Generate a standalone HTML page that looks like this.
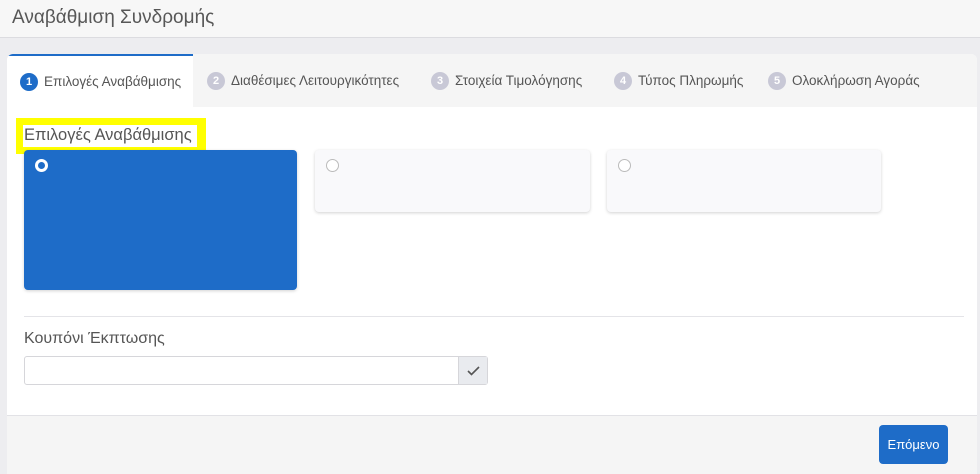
<!DOCTYPE html>
<html><head><meta charset="utf-8"><style>
*{box-sizing:border-box;margin:0;padding:0}
body{width:980px;height:474px;background:#ededf0;font-family:"Liberation Sans","DejaVu Sans",sans-serif;position:relative;overflow:hidden;color:#555}
.hdr{position:absolute;left:0;top:0;width:980px;height:38px;background:#f7f7f7;border-bottom:1px solid #dcdce0}
.hdr span{position:absolute;left:12px;top:7px;font-size:19px;color:#575757}
.card{position:absolute;left:7px;top:54px;width:970px;height:420px;background:#fff;border-radius:6px 6px 0 0;overflow:hidden}
.tabs{position:absolute;left:0;top:0;width:970px;height:53px;background:#f5f5f5}
.tab{position:absolute;top:0;height:53px;font-size:13.5px;color:#555;display:flex;align-items:center;white-space:nowrap}
.tab.a{left:0;width:186px;background:#fff;border-top:2px solid #1e6cc8;padding-left:13px}
.n{display:inline-block;width:18px;height:18px;border-radius:50%;background:#c8c8d6;color:#fff;font-size:11px;font-weight:bold;text-align:center;line-height:18px;margin-right:6px}
.a .n{background:#1e6cc8}
.yb{position:absolute;left:16px;top:118px;width:190px;height:36px;background:#ffff00}
.yb span{position:absolute;left:7px;top:7px;width:174px;height:22px;background:#fff;font-size:16.5px;color:#555;padding-left:1px;line-height:21px;white-space:nowrap}
.opt{position:absolute;border-radius:4px;box-shadow:0 1px 3px rgba(0,0,0,.18);background:#f9f9fb}
.r{position:absolute;left:11px;top:9px;width:13px;height:13px;border-radius:50%;border:1px solid #bbb;background:#fff}
.sel{background:#1e6cc8}
.sel .r{border:3px solid #fff;background:#1e6cc8}
.div{position:absolute;left:24px;top:316px;width:940px;height:1px;background:#e4e4e8}
.lbl{position:absolute;left:24px;top:330px;font-size:16px;color:#555}
.inp{position:absolute;left:24px;top:356px;width:464px;height:29px;border:1px solid #d6d6da;border-radius:3px;background:#fff}
.chk{position:absolute;right:0;top:0;width:29px;height:27px;background:#e9ebef;border-left:1px solid #d6d6da}
.foot{position:absolute;left:7px;top:415px;width:970px;height:59px;background:#f5f5f5;border-top:1px solid #e2e2e6}
.btn{position:absolute;left:879px;top:425px;width:69px;height:39px;background:#1e6cc8;border-radius:4px;color:#fff;font-size:13px;text-align:center;line-height:39px}
</style></head><body>
<div class="hdr"><span>Αναβάθμιση Συνδρομής</span></div>
<div class="card">
<div class="tabs">
<div class="tab a"><span class="n">1</span>Επιλογές Αναβάθμισης</div>
<div class="tab" style="left:200px"><span class="n">2</span>Διαθέσιμες Λειτουργικότητες</div>
<div class="tab" style="left:424px"><span class="n">3</span>Στοιχεία Τιμολόγησης</div>
<div class="tab" style="left:607px"><span class="n">4</span>Τύπος Πληρωμής</div>
<div class="tab" style="left:761px"><span class="n">5</span>Ολοκλήρωση Αγοράς</div>
</div>
</div>
<div class="yb"><span>Επιλογές Αναβάθμισης</span></div>
<div class="opt sel" style="left:24px;top:150px;width:273px;height:140px"><div class="r"></div></div>
<div class="opt" style="left:315px;top:150px;width:275px;height:62px"><div class="r"></div></div>
<div class="opt" style="left:607px;top:150px;width:274px;height:62px"><div class="r"></div></div>
<div class="div"></div>
<div class="lbl">Κουπόνι Έκπτωσης</div>
<div class="inp"><div class="chk"><svg width="29" height="27" viewBox="0 0 29 27"><path d="M9 14l3.5 3.5L20 10" fill="none" stroke="#555" stroke-width="1.6"/></svg></div></div>
<div class="foot"></div>
<div class="btn">Επόμενο</div>
</body></html>
